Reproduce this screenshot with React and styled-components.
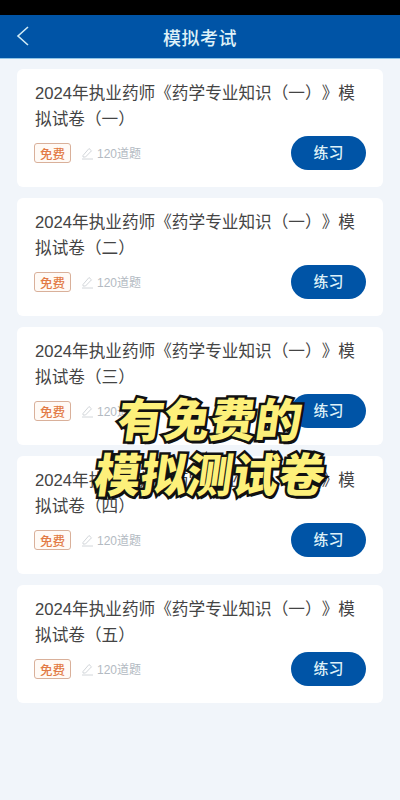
import styled, { createGlobalStyle } from 'styled-components'

const Global = createGlobalStyle`
  html, body {
    margin: 0;
    padding: 0;
    background: #f1f5fa;
  }
  * {
    box-sizing: border-box;
  }
`

const papers = ['一', '二', '三', '四', '五']

const App = () => {
  return (
    <Page>
      <Global />
      <StatusBar />
      <Header>
        <BackIcon width="16" height="22" viewBox="0 0 16 22">
          <path d="M13 2 L3 11 L13 20" fill="none" stroke="#cfeaf5" strokeWidth="1.6" />
        </BackIcon>
        <HeaderTitle>模拟考试</HeaderTitle>
      </Header>
      <List>
        {papers.map((n) => (
          <Card key={n}>
            <CardTitle>2024年执业药师《药学专业知识（一）》模拟试卷（{n}）</CardTitle>
            <CardFoot>
              <Meta>
                <Tag>免费</Tag>
                <Count>
                  <svg width="13" height="14" viewBox="0 0 13 14">
                    <path d="M2 9.5 L8 2.5 L10.5 4.8 L4.5 11 L2 11 Z" fill="none" stroke="#d2d6da" strokeWidth="1" />
                    <path d="M1 13 L12 13" stroke="#d2d6da" strokeWidth="1" />
                  </svg>
                  <CountText>120道题</CountText>
                </Count>
              </Meta>
              <PracticeButton>练习</PracticeButton>
            </CardFoot>
          </Card>
        ))}
      </List>
      <Caption>
        <span>有免费的</span>
        <span>模拟测试卷</span>
      </Caption>
    </Page>
  )
}

const Page = styled.div`
  position: relative;
  width: 400px;
  height: 800px;
  overflow: hidden;
  background: #f1f5fa;
  font-family: "Liberation Sans", "Noto Sans CJK SC", sans-serif;
  text-spacing-trim: space-all;
`

const StatusBar = styled.div`
  height: 15px;
  background: #000;
`

const Header = styled.div`
  position: relative;
  height: 44px;
  background: #0054a6;
  display: flex;
  align-items: center;
  justify-content: center;
  border-bottom: 1px solid #8fc4e6;
`

const BackIcon = styled.svg`
  position: absolute;
  left: 15px;
  top: 10px;
`

const HeaderTitle = styled.div`
  color: #dff1f8;
  font-size: 18px;
  font-weight: 500;
  letter-spacing: 0.5px;
`

const List = styled.div`
  display: flex;
  flex-direction: column;
  gap: 11px;
  padding: 10px 17px 0;
`

const Card = styled.div`
  height: 118px;
  background: #fff;
  border-radius: 6px;
  padding: 11px 17px 0 18px;
`

const CardTitle = styled.div`
  color: #444;
  font-size: 16.65px;
  line-height: 26px;
  padding-top: 1px;
`

const CardFoot = styled.div`
  display: flex;
  align-items: center;
  justify-content: space-between;
  margin-top: 3px;
`

const Meta = styled.div`
  display: flex;
  align-items: center;
  gap: 10px;
  margin-left: -1px;
`

const Tag = styled.div`
  width: 37px;
  height: 20px;
  display: flex;
  align-items: center;
  justify-content: center;
  border: 1px solid #d9b09a;
  border-radius: 3px;
  background: #fffaf6;
  color: #e27a45;
  font-size: 12.5px;
  font-weight: 500;
`

const Count = styled.div`
  display: flex;
  align-items: center;
  gap: 3px;
  color: #b3bac2;
  font-size: 12px;
`

const CountText = styled.span`
  padding-bottom: 2px;
`

const PracticeButton = styled.button`
  width: 75px;
  height: 34px;
  border: 0;
  border-radius: 17px;
  padding: 0 0 3px;
  background: #0054a6;
  color: #dff1f8;
  font-family: inherit;
  font-size: 15px;
  font-weight: 500;
`

const Caption = styled.div`
  position: absolute;
  left: 0;
  right: 0;
  top: 394px;
  padding-left: 20px;
  display: flex;
  flex-direction: column;
  align-items: center;
  span {
    color: #fdf07a;
    font-size: 46px;
    font-weight: 900;
    line-height: 55px;
    transform: skewX(-8deg);
    -webkit-text-stroke: 5px #111;
    paint-order: stroke fill;
    text-shadow: 2px 3px 0 #111;
  }
`

export default App
